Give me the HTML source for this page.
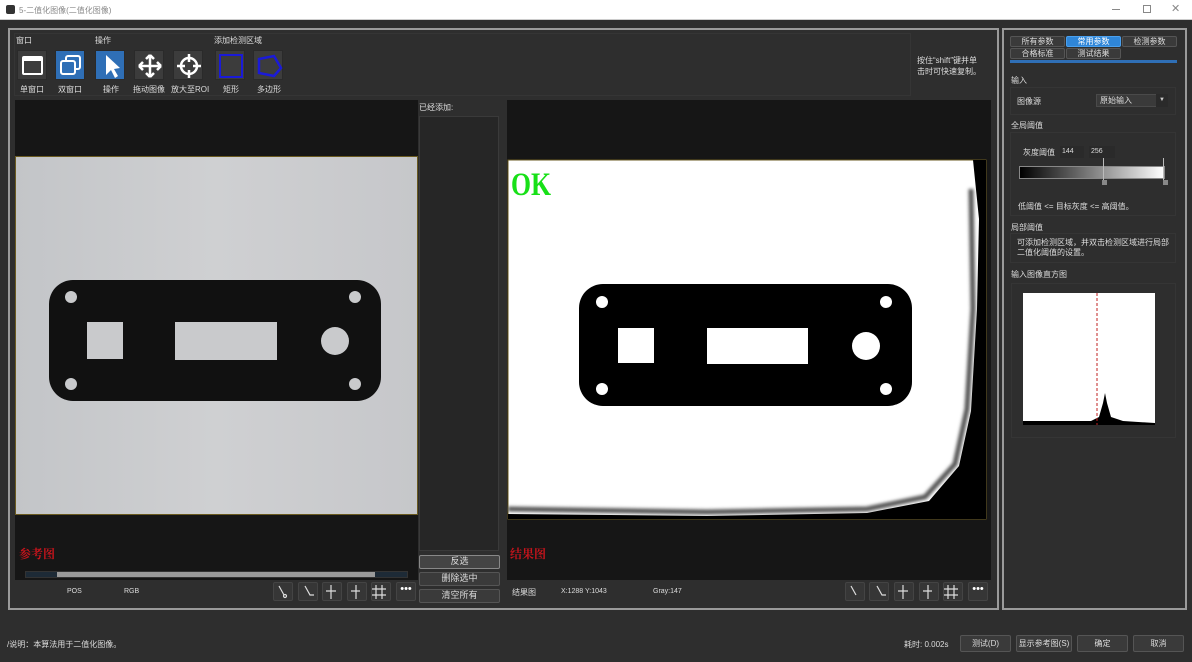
<!DOCTYPE html>
<html><head><meta charset="utf-8"><style>
*{margin:0;padding:0;box-sizing:border-box}
body{width:1192px;height:662px;background:#2e2e2e;font-family:"Liberation Sans","Noto Sans CJK SC",sans-serif;font-size:9px;color:#ddd;position:relative;overflow:hidden;white-space:nowrap}
.a{position:absolute}
.btn{position:absolute;background:#3a3a3a;border:1px solid #555;color:#ddd;text-align:center;font-size:9px;line-height:11px;border-radius:2px;white-space:nowrap;overflow:hidden}
.tb{position:absolute;width:30px;height:30px;background:#3c3c3c;border:1px solid #2a2a2a;top:50px}
.tl{position:absolute;top:84px;font-size:8px;color:#ddd}
.ib{position:absolute;top:582px;width:20px;height:19px;background:#363636;border:1px solid #444;border-radius:2px}
</style></head><body>
<div class="a" style="left:0;top:0;width:1192px;height:20px;background:#fff;border-bottom:1px solid #ccc"></div>
<div class="a" style="left:6px;top:5px;width:9px;height:9px;background:#333;border-radius:2px"></div>
<div class="a" style="left:19px;top:5px;font-size:8px;color:#888">5-二值化图像(二值化图像)</div>
<div class="a" style="left:1112px;top:9px;width:8px;height:1px;background:#888"></div>
<div class="a" style="left:1143px;top:5px;width:8px;height:8px;border:1px solid #888"></div>
<div class="a" style="left:1171px;top:2px;font-size:11px;color:#888">✕</div>

<div class="a" style="left:8px;top:28px;width:991px;height:582px;border:2px solid #9a9a9a"></div>
<div class="a" style="left:1002px;top:28px;width:185px;height:582px;border:2px solid #9a9a9a"></div>

<div class="a" style="left:14px;top:33px;width:897px;height:63px;border:1px solid #353535"></div>
<div class="a" style="left:16px;top:35px;font-size:8px">窗口</div>
<div class="a" style="left:95px;top:35px;font-size:8px">操作</div>
<div class="a" style="left:214px;top:35px;font-size:8px">添加检测区域</div>
<div class="tb" style="left:17px"><div class="a" style="left:4px;top:5px;width:21px;height:19px;border:2px solid #fff;border-top-width:5px;border-radius:2px"></div></div>
<div class="tb" style="left:55px;background:#2f6fb6"><div class="a" style="left:9px;top:4px;width:16px;height:15px;border:2px solid #fff;border-radius:3px"></div><div class="a" style="left:4px;top:9px;width:16px;height:15px;border:2px solid #fff;border-radius:3px;background:#2f6fb6"></div></div>
<div class="tb" style="left:95px;background:#2f6fb6"><svg width="30" height="30"><path d="M10 4 L10 24 L15 19 L19 27 L22 25 L18 18 L24 17 Z" fill="#fff"/></svg></div>
<div class="tb" style="left:134px"><svg width="30" height="30"><path d="M15 4V26M4 15H26M15 4l-4 4M15 4l4 4M15 26l-4-4M15 26l4-4M4 15l4-4M4 15l4 4M26 15l-4-4M26 15l-4 4" stroke="#fff" stroke-width="2.5" fill="none"/></svg></div>
<div class="tb" style="left:173px"><svg width="30" height="30"><circle cx="15" cy="15" r="8" stroke="#fff" stroke-width="2.5" fill="none"/><path d="M15 3V11M15 19V27M3 15H11M19 15H27" stroke="#fff" stroke-width="2.5"/></svg></div>
<div class="tb" style="left:215px"><div class="a" style="left:3px;top:3px;width:24px;height:24px;border:2px solid #1a1ad8"></div></div>
<div class="tb" style="left:253px"><svg width="30" height="30"><path d="M5 8 L20 5 L27 17 L20 25 L5 22 Z" stroke="#1a1ad8" stroke-width="2.5" fill="none"/></svg></div>
<div class="tl" style="left:20px">单窗口</div><div class="tl" style="left:58px">双窗口</div><div class="tl" style="left:103px">操作</div><div class="tl" style="left:133px">拖动图像</div><div class="tl" style="left:171px">放大至ROI</div><div class="tl" style="left:223px">矩形</div><div class="tl" style="left:257px">多边形</div>
<div class="a" style="left:917px;top:55px;font-size:8px;line-height:11px">按住“shift”键并单<br>击时可快速复制。</div>

<div class="a" style="left:15px;top:100px;width:403px;height:480px;background:#161616"></div>
<div class="a" style="left:15px;top:156px;width:403px;height:359px;background:linear-gradient(90deg,#c3c5c8,#cfd0d2 50%,#c6c7ca);border:1px solid #6a5a20"></div>
<svg class="a" style="left:0;top:0" width="420" height="520"><rect x="49" y="280" width="332" height="121" rx="24" fill="#111"/><g fill="#c9cacc"><circle cx="71" cy="297" r="6"/><circle cx="355" cy="297" r="6"/><circle cx="71" cy="384" r="6"/><circle cx="355" cy="384" r="6"/><rect x="87" y="322" width="36" height="37"/><rect x="175" y="322" width="102" height="38"/><circle cx="335" cy="341" r="14"/></g></svg>
<div class="a" style="left:19px;top:545px;font-size:12px;color:#c8141c;font-family:'Noto Serif CJK SC',serif;font-weight:bold">参考图</div>
<div class="a" style="left:25px;top:571px;width:383px;height:7px;background:#1d2a36;border:1px solid #333"></div>
<div class="a" style="left:57px;top:572px;width:318px;height:5px;background:#9a9a9a"></div>
<div class="a" style="left:67px;top:588px;font-size:7px">POS</div><div class="a" style="left:124px;top:588px;font-size:7px">RGB</div>

<div class="a" style="left:419px;top:102px;font-size:8px">已经添加:</div>
<div class="a" style="left:419px;top:116px;width:80px;height:435px;background:#262626;border:1px solid #3a3a3a"></div>
<div class="btn" style="left:419px;top:555px;width:81px;height:14px;border-color:#888;background:#444">反选</div>
<div class="btn" style="left:419px;top:572px;width:81px;height:14px">删除选中</div>
<div class="btn" style="left:419px;top:589px;width:81px;height:14px">清空所有</div>

<div class="a" style="left:507px;top:100px;width:484px;height:480px;background:#161616"></div>
<svg class="a" style="left:507px;top:159px" width="480" height="361"><defs><filter id="b"><feGaussianBlur stdDeviation="1.5"/></filter></defs><rect x="1" y="1" width="478" height="359" fill="#fff" stroke="#6a5a20"/><path d="M464 30 L466 150 L460 250 L448 305 L418 338 L360 350 L200 353 L1 350" stroke="#555" stroke-width="5" fill="none" filter="url(#b)"/><path d="M466 1 L479 1 L479 360 L1 360 L1 355 L200 357 L360 354 L422 342 L452 307 L464 252 L470 150 L472 60 Z" fill="#000"/><rect x="72" y="125" width="333" height="122" rx="24" fill="#000"/><g fill="#fff"><circle cx="95" cy="143" r="6"/><circle cx="379" cy="143" r="6"/><circle cx="95" cy="230" r="6"/><circle cx="379" cy="230" r="6"/><rect x="111" y="169" width="36" height="35"/><rect x="200" y="169" width="101" height="36"/><circle cx="359" cy="187" r="14"/></g></svg>
<div class="a" style="left:511px;top:168px;font-size:33px;font-weight:bold;color:#18e018;font-family:'Liberation Serif',serif;line-height:34px;transform:scaleX(0.78);transform-origin:left">OK</div>
<div class="a" style="left:510px;top:545px;font-size:12px;color:#c8141c;font-family:'Noto Serif CJK SC',serif;font-weight:bold">结果图</div>
<div class="a" style="left:512px;top:587px;font-size:8px">结果图</div>
<div class="a" style="left:561px;top:588px;font-size:7px">X:1288 Y:1043</div>
<div class="a" style="left:653px;top:588px;font-size:7px">Gray:147</div>

<div class="ib" style="left:273px"></div><div class="ib" style="left:298px"></div><div class="ib" style="left:322px"></div><div class="ib" style="left:347px"></div><div class="ib" style="left:371px"></div><div class="ib" style="left:396px;color:#fff;font-size:11px;text-align:center;line-height:13px">•••</div>
<div class="ib" style="left:845px"></div><div class="ib" style="left:869px"></div><div class="ib" style="left:894px"></div><div class="ib" style="left:919px"></div><div class="ib" style="left:943px"></div><div class="ib" style="left:968px;color:#fff;font-size:11px;text-align:center;line-height:13px">•••</div>
<svg class="a" style="left:0;top:580px" width="1000" height="25"><g stroke="#ddd" stroke-width="1.2" fill="none"><path d="M279 6l5 9M305 6l5 9h4"/><circle cx="285" cy="16" r="1.5"/><path d="M331 5v14M326 11h10M356 5v14M351 11h9M376 5v14M382 5v14M372 9h14M372 15h14"/><path d="M851 6l5 9M877 6l5 9h4M903 5v14M898 11h10M928 5v14M923 11h9M948 5v14M954 5v14M944 9h14M944 15h14"/></g></svg>

<div class="btn" style="left:1010px;top:36px;width:55px;height:11px;line-height:9px;font-size:8px">所有参数</div>
<div class="btn" style="left:1066px;top:36px;width:55px;height:11px;line-height:9px;font-size:8px;background:#2f86d8;border-color:#4aa0ee;color:#fff">常用参数</div>
<div class="btn" style="left:1122px;top:36px;width:55px;height:11px;line-height:9px;font-size:8px">检测参数</div>
<div class="btn" style="left:1010px;top:48px;width:55px;height:11px;line-height:9px;font-size:8px">合格标准</div>
<div class="btn" style="left:1066px;top:48px;width:55px;height:11px;line-height:9px;font-size:8px">测试结果</div>
<div class="a" style="left:1010px;top:60px;width:167px;height:3px;background:#2f6fb6"></div>
<div class="a" style="left:1011px;top:75px;font-size:8px">输入</div>
<div class="a" style="left:1010px;top:87px;width:166px;height:28px;border:1px solid #353535"></div>
<div class="a" style="left:1017px;top:96px;font-size:8px">图像源</div>
<div class="a" style="left:1096px;top:94px;width:72px;height:13px;background:#3a3a3a;border:1px solid #4a4a4a;font-size:8px;padding-left:3px;line-height:11px">原始输入</div>
<div class="a" style="left:1156px;top:94px;width:12px;height:13px;background:#2a2a2a;color:#ccc;font-size:6px;text-align:center;line-height:13px">▼</div>
<div class="a" style="left:1011px;top:120px;font-size:8px">全局阈值</div>
<div class="a" style="left:1010px;top:132px;width:166px;height:84px;border:1px solid #353535"></div>
<div class="a" style="left:1023px;top:147px;font-size:8px">灰度阈值</div>
<div class="a" style="left:1060px;top:146px;width:24px;height:12px;background:#2a2a2a;font-size:7px;padding:2px 2px">144</div>
<div class="a" style="left:1089px;top:146px;width:26px;height:12px;background:#2a2a2a;font-size:7px;padding:2px 2px">256</div>
<div class="a" style="left:1019px;top:166px;width:146px;height:13px;background:linear-gradient(90deg,#000,#fff);border:1px solid #888"></div>
<div class="a" style="left:1103px;top:158px;width:1px;height:22px;background:#bbb"></div>
<div class="a" style="left:1102px;top:180px;width:5px;height:5px;background:#888"></div>
<div class="a" style="left:1163px;top:158px;width:1px;height:22px;background:#bbb"></div>
<div class="a" style="left:1163px;top:180px;width:5px;height:5px;background:#888"></div>
<div class="a" style="left:1018px;top:201px;font-size:8px">低阈值 &lt;= 目标灰度 &lt;= 高阈值。</div>
<div class="a" style="left:1011px;top:222px;font-size:8px">局部阈值</div>
<div class="a" style="left:1010px;top:233px;width:166px;height:30px;border:1px solid #353535"></div>
<div class="a" style="left:1017px;top:238px;font-size:8px;line-height:10px">可添加检测区域，并双击检测区域进行局部<br>二值化阈值的设置。</div>
<div class="a" style="left:1011px;top:269px;font-size:8px">输入图像直方图</div>
<div class="a" style="left:1011px;top:283px;width:165px;height:155px;border:1px solid #353535"></div>
<svg class="a" style="left:1023px;top:293px" width="132" height="132"><rect width="132" height="132" fill="#fff"/><path d="M0 132 L0 128 L68 128 L76 124 L80 110 L82 100 L84 110 L88 124 L100 128 L132 130 L132 132 Z" fill="#000"/><path d="M74 0V132" stroke="#c02020" stroke-dasharray="3 2"/></svg>

<div class="a" style="left:7px;top:639px;font-size:8px">/说明：本算法用于二值化图像。</div>
<div class="a" style="left:904px;top:639px;font-size:8px">耗时: 0.002s</div>
<div class="btn" style="left:960px;top:635px;width:51px;height:17px;line-height:15px;font-size:8px">测试(D)</div>
<div class="btn" style="left:1016px;top:635px;width:56px;height:17px;line-height:15px;font-size:8px">显示参考图(S)</div>
<div class="btn" style="left:1077px;top:635px;width:51px;height:17px;line-height:15px;font-size:8px">确定</div>
<div class="btn" style="left:1133px;top:635px;width:51px;height:17px;line-height:15px;font-size:8px">取消</div>
</body></html>
